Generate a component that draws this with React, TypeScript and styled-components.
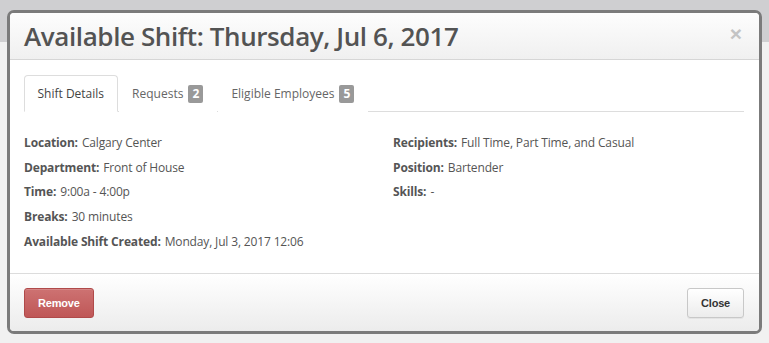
import React from "react";
import styled, { createGlobalStyle } from "styled-components";

const Global = createGlobalStyle`
  html, body { margin: 0; padding: 0; }
  body {
    width: 769px;
    height: 343px;
    overflow: hidden;
    font-family: "Open Sans", "Liberation Sans", sans-serif;
    background: #f2f2f2;
  }
`;

const Page = styled.div`
  position: relative;
  width: 769px;
  height: 343px;
  background: linear-gradient(#cfcfd1 0, #cfcfd1 42px, #f1f1f1 42px, #f1f1f1 100%);
  padding: 10px 7px 0 7px;
  box-sizing: border-box;
`;

const Modal = styled.div`
  width: 755px;
  height: 324px;
  box-sizing: border-box;
  border: 3px solid #7b7b7b;
  border-radius: 7px;
  background: #fff;
  display: flex;
  flex-direction: column;
  overflow: hidden;
`;

const Header = styled.div`
  height: 47px;
  box-sizing: border-box;
  display: flex;
  align-items: center;
  justify-content: space-between;
  padding: 0 17px 0 14px;
  background: linear-gradient(#fdfdfd, #f0f0f0);
  border-bottom: 1px solid #d6d6d6;
`;

const Title = styled.h1`
  margin: 0;
  font-family: "Open Sans", sans-serif;
  font-weight: 600;
  font-size: 26px;
  color: #535353;
  letter-spacing: -0.4px;
`;

const CloseX = styled.span`
  font-family: "Liberation Sans", sans-serif;
  font-weight: bold;
  font-size: 21px;
  color: #c4c4c4;
  line-height: 1;
  margin-top: -6px;
`;

const Body = styled.div`
  flex: 1;
  padding: 15px 15px 0 14px;
  display: flex;
  flex-direction: column;
`;

const Tabs = styled.div`
  display: flex;
  border-bottom: 1px solid #dddddd;
  height: 36px;
`;

const Tab = styled.div<{ $active?: boolean }>`
  display: flex;
  align-items: center;
  gap: 5px;
  padding: 0 12.5px;
  font-size: 12px;
  color: ${(p) => (p.$active ? "#444" : "#666")};
  border: 1px solid ${(p) => (p.$active ? "#dddddd" : "transparent")};
  border-bottom-color: ${(p) => (p.$active ? "#fff" : "transparent")};
  border-radius: 4px 4px 0 0;
  margin-bottom: -1px;
  background: #fff;
  margin-right: 1px;
`;

const Badge = styled.span`
  display: inline-flex;
  align-items: center;
  justify-content: center;
  min-width: 15px;
  height: 18px;
  border-radius: 2px;
  background: #999;
  color: #fff;
  font-weight: 700;
  font-size: 12px;
`;

const Details = styled.div`
  display: grid;
  grid-template-columns: 369px 1fr;
  padding-top: 18px;
`;

const Col = styled.div`
  display: flex;
  flex-direction: column;
`;

const Row = styled.div`
  height: 24.75px;
  display: flex;
  align-items: center;
  font-size: 12px;
  letter-spacing: -0.15px;
  color: #555;
  white-space: nowrap;
`;

const Label = styled.b`
  font-weight: 700;
  margin-right: 4px;
`;

const Footer = styled.div`
  height: 58px;
  box-sizing: border-box;
  border-top: 1px solid #dcdcdc;
  background: linear-gradient(#ffffff, #ececec);
  display: flex;
  align-items: center;
  justify-content: space-between;
  padding: 1px 15px 0 14px;
`;

const Button = styled.button<{ $danger?: boolean }>`
  height: 30px;
  padding: 0 13px;
  border-radius: 3px;
  font-family: "Liberation Sans", Arial, sans-serif;
  font-weight: bold;
  font-size: 11px;
  letter-spacing: -0.2px;
  cursor: pointer;
  color: ${(p) => (p.$danger ? "#fff" : "#333")};
  border: 1px solid ${(p) => (p.$danger ? "#b04a4a" : "#c8c8c8")};
  background: ${(p) =>
    p.$danger
      ? "linear-gradient(#cd7272, #bf5757)"
      : "linear-gradient(#ffffff, #ececec)"};
  box-shadow: ${(p) => (p.$danger ? "inset 0 1px 0 rgba(255,255,255,0.15)" : "0 1px 0 rgba(0,0,0,0.05)")};
`;

const left: [string, string][] = [
  ["Location:", "Calgary Center"],
  ["Department:", "Front of House"],
  ["Time:", "9:00a - 4:00p"],
  ["Breaks:", "30 minutes"],
  ["Available Shift Created:", "Monday, Jul 3, 2017 12:06"],
];

const right: [string, string][] = [
  ["Recipients:", "Full Time, Part Time, and Casual"],
  ["Position:", "Bartender"],
  ["Skills:", "-"],
];

export default function App() {
  return (
    <>
      <Global />
      <Page>
        <Modal>
          <Header>
            <Title>Available Shift: Thursday, Jul 6, 2017</Title>
            <CloseX>×</CloseX>
          </Header>
          <Body>
            <Tabs>
              <Tab $active>Shift Details</Tab>
              <Tab>
                Requests <Badge>2</Badge>
              </Tab>
              <Tab>
                Eligible Employees <Badge>5</Badge>
              </Tab>
            </Tabs>
            <Details>
              <Col>
                {left.map(([l, v]) => (
                  <Row key={l}>
                    <Label>{l}</Label>
                    {v}
                  </Row>
                ))}
              </Col>
              <Col>
                {right.map(([l, v]) => (
                  <Row key={l}>
                    <Label>{l}</Label>
                    {v}
                  </Row>
                ))}
              </Col>
            </Details>
          </Body>
          <Footer>
            <Button $danger>Remove</Button>
            <Button>Close</Button>
          </Footer>
        </Modal>
      </Page>
    </>
  );
}
